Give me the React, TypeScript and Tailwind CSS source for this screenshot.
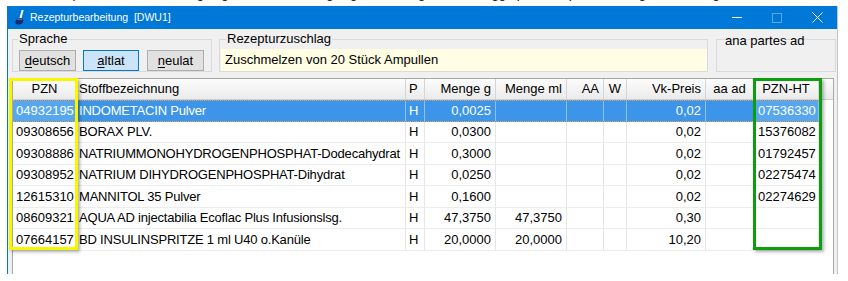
const cols = [
  { title: 'PZN', w: 'w-[64px]', head: 'justify-center', cell: 'justify-start pl-[3px]' },
  { title: 'Stoffbezeichnung', w: 'w-[329px]', head: 'justify-start pl-[2px]', cell: 'justify-start pl-[2px] tracking-[-0.2px]' },
  { title: 'P', w: 'w-[19px]', head: 'justify-start pl-[3px]', cell: 'justify-start pl-[3px]' },
  { title: 'Menge g', w: 'w-[71px]', head: 'justify-end pr-[4px]', cell: 'justify-end pr-[4px]' },
  { title: 'Menge ml', w: 'w-[71px]', head: 'justify-end pr-[4px]', cell: 'justify-end pr-[4px]' },
  { title: 'AA', w: 'w-[37px]', head: 'justify-end pr-[4px]', cell: 'justify-end pr-[4px]' },
  { title: 'W', w: 'w-[23px]', head: 'justify-center', cell: 'justify-center' },
  { title: 'Vk-Preis', w: 'w-[79px]', head: 'justify-end pr-[4px]', cell: 'justify-end pr-[4px]' },
  { title: 'aa ad', w: 'w-[48px]', head: 'justify-center', cell: 'justify-center' },
  { title: 'PZN-HT', w: 'w-[65px]', head: 'justify-center', cell: 'justify-start pl-[4px]' },
];

const rows = [
  ['04932195', 'INDOMETACIN Pulver', 'H', '0,0025', '', '', '', '0,02', '', '07536330'],
  ['09308656', 'BORAX PLV.', 'H', '0,0300', '', '', '', '0,02', '', '15376082'],
  ['09308886', 'NATRIUMMONOHYDROGENPHOSPHAT-Dodecahydrat', 'H', '0,3000', '', '', '', '0,02', '', '01792457'],
  ['09308952', 'NATRIUM DIHYDROGENPHOSPHAT-Dihydrat', 'H', '0,0250', '', '', '', '0,02', '', '02275474'],
  ['12615310', 'MANNITOL 35 Pulver', 'H', '0,1600', '', '', '', '0,02', '', '02274629'],
  ['08609321', 'AQUA AD injectabilia Ecoflac Plus Infusionslsg.', 'H', '47,3750', '47,3750', '', '', '0,30', '', ''],
  ['07664157', 'BD INSULINSPRITZE 1 ml U40 o.Kanüle', 'H', '20,0000', '20,0000', '', '', '10,20', '', ''],
];

function Mnemonic({ text }: { text: string }) {
  return (
    <span>
      <span className="underline underline-offset-2">{text[0]}</span>
      {text.slice(1)}
    </span>
  );
}

function LangButton({ text, active }: { text: string; active?: boolean }) {
  return (
    <div
      className={
        'flex h-[21px] items-center justify-center border text-[13px] ' +
        (active ? 'w-[56px] border-[#0078d7] bg-[#cce4f7]' : 'w-[57px] border-[#adadad] bg-[#e1e1e1]')
      }
    >
      <Mnemonic text={text} />
    </div>
  );
}

function BrushIcon() {
  return (
    <svg width="12" height="15" viewBox="0 0 12 15">
      <path d="M8.5 0.5 L6.5 8" stroke="#ffffff" strokeWidth="2" strokeLinecap="round" />
      <path d="M3 9 C5 7.5 8 7.8 9 9.5 C10 12 8 14.5 4.5 14.5 C2 14.5 0.5 13 1.5 11.5 Z" fill="#1b2a6b" />
      <path d="M3.5 9.5 C5 8.8 7 9 8 10" stroke="#8aa0d8" strokeWidth="0.8" fill="none" />
    </svg>
  );
}

export default function App() {
  return (
    <div className="relative h-[281px] w-[848px] overflow-hidden bg-white font-['Liberation_Sans',Arial,sans-serif] text-black">
      <div className="h-[6px] overflow-hidden">
        <div className="ml-[6px] mt-[-14px] whitespace-nowrap text-[13px] leading-[15px]">
          Jeder Rezeptur kann ein Zuschlag zugeordnet werden, gültig bis zur Abgabe; Stoffe ggf. prüfen, Apotheke Programm Hilfe gibt Auskunft
        </div>
      </div>

      <div className="ml-[7px] flex h-[268px] w-[831px] flex-col border-l border-r border-l-[#0078d7] border-r-[#c4c4c4] bg-[#f0f0f0]">
        {/* title bar */}
        <div className="flex h-[23px] items-center bg-[#0078d7] text-white">
          <div className="ml-[6px] flex w-[16px] items-center">
            <BrushIcon />
          </div>
          <div className="whitespace-pre text-[10.5px]">Rezepturbearbeitung  [DWU1]</div>
          <div className="ml-auto flex h-full">
            <div className="flex w-[40px] items-center justify-center">
              <div className="h-px w-[10px] bg-white" />
            </div>
            <div className="flex w-[40px] items-center justify-center">
              <div className="h-[10px] w-[10px] border border-white/35" />
            </div>
            <div className="flex w-[40px] items-center justify-center">
              <svg width="11" height="11" viewBox="0 0 11 11">
                <path d="M0.5 0.5 L10.5 10.5 M10.5 0.5 L0.5 10.5" stroke="#ffffff" strokeWidth="1" />
              </svg>
            </div>
          </div>
        </div>

        {/* body */}
        <div className="flex flex-1 flex-col pl-[4px] pt-[10px]">
          <div className="flex h-[33px] text-[13px]">
            <div className="relative flex w-[200px] gap-[7px] border border-[#dadada] pl-[6px] pt-[10px]">
              <span className="absolute left-[5px] top-[-9px] bg-[#f0f0f0] px-[1px] leading-[15px]">Sprache</span>
              <LangButton text="deutsch" />
              <div className="flex gap-[8px]">
                <LangButton text="altlat" active />
                <LangButton text="neulat" />
              </div>
            </div>
            <div className="relative ml-[7px] w-[489px] border border-[#dadada] pl-[1px] pt-[9px]">
              <span className="absolute left-[6px] top-[-9px] bg-[#f0f0f0] px-[1px] leading-[15px]">Rezepturzuschlag</span>
              <div className="flex h-[22px] w-[486px] items-center bg-[#fffde3] pl-[4px]">Zuschmelzen von 20 Stück Ampullen</div>
            </div>
            <div className="relative ml-[8px] w-[120px] border border-[#dadada]">
              <span className="absolute left-[8px] top-[-7px] leading-[15px]">ana partes ad</span>
            </div>
          </div>

          {/* grid */}
          <div className="relative mt-[6px] w-[822px] flex-1 border border-b-0 border-[#a9a9a9] bg-white text-[13px]">
            <div className="flex h-[21px] border-b border-[#d0d0d0] bg-linear-to-b from-[#fcfcfc] to-[#ebebeb]">
              {cols.map((c) => (
                <div key={c.title} className={`flex items-center border-r border-[#d5d5d5] ${c.w} ${c.head}`}>
                  {c.title}
                </div>
              ))}
            </div>
            {rows.map((r, i) => {
              const sel = i === 0;
              return (
                <div
                  key={r[0]}
                  className={
                    'flex h-[21.5px] w-[806px] ' +
                    (sel
                      ? 'border-y border-dotted border-[#e8a25a] bg-[#3d95e9] text-white'
                      : 'border-b border-[#ececec]')
                  }
                >
                  {r.map((v, j) => (
                    <div
                      key={j}
                      className={
                        `flex items-center overflow-hidden whitespace-nowrap border-r ${cols[j].w} ${cols[j].cell} ` +
                        (sel
                          ? j === 0 || j === 9
                            ? 'border-[#8cc2f2] bg-[#56a7ef]'
                            : 'border-[#8cc2f2]'
                          : 'border-[#e6e6e6]')
                      }
                    >
                      {v}
                    </div>
                  ))}
                </div>
              );
            })}

            {/* highlight frames */}
            <div className="absolute left-[-4px] top-[-1px] h-[172px] w-[69px] border-[3px] border-[#f7f700] shadow-[2px_2px_3px_rgba(0,0,0,0.3)]" />
            <div className="absolute left-[740px] top-[-1px] h-[172px] w-[69px] border-[3px] border-[#0c9e0c] shadow-[2px_2px_3px_rgba(0,0,0,0.3)]" />
          </div>
        </div>
      </div>
    </div>
  );
}
